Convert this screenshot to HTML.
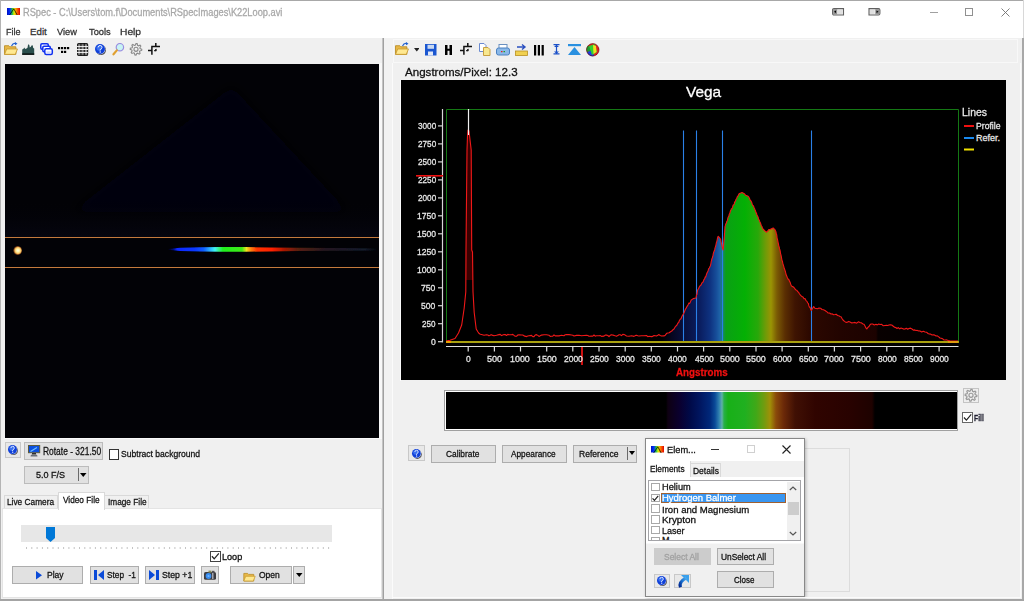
<!DOCTYPE html>
<html><head><meta charset="utf-8"><style>
html,body{margin:0;padding:0;width:1024px;height:601px;overflow:hidden;background:#f0f0f0}
body{position:relative;font-family:"Liberation Sans",sans-serif}
.t{position:absolute;white-space:pre;transform-origin:0 0;font-family:"Liberation Sans",sans-serif;-webkit-text-stroke:0.28px currentColor}
</style></head><body>
<div style="position:absolute;left:0px;top:0px;width:1024px;height:601px;background:#f0f0f0"></div>
<div style="position:absolute;left:0px;top:0px;width:1024px;height:38px;background:#fff"></div>
<svg style="position:absolute;left:7px;top:8px" width="13" height="7"><defs><linearGradient id="ri" x1="0" x2="1"><stop offset="0" stop-color="#0010c0"/><stop offset="0.22" stop-color="#0030ff"/><stop offset="0.4" stop-color="#20c040"/><stop offset="0.55" stop-color="#e0f000"/><stop offset="0.75" stop-color="#ff7000"/><stop offset="1" stop-color="#e00000"/></linearGradient></defs><rect width="13" height="7" fill="url(#ri)"/><path d="M2.6,7 L6.8,0.8 L10.2,7" stroke="#000" stroke-width="1" fill="none" opacity="0.75"/></svg>
<svg style="position:absolute;left:832px;top:8px" width="13" height="8"><path d="M2,0.6 H11.5 V7 H2 Q0.6,7 0.6,5.6 V2 Q0.6,0.6 2,0.6Z" fill="#f0f0f0" stroke="#606060" stroke-width="1.1"/><rect x="1.2" y="1.2" width="4" height="5.3" fill="#909090"/><path d="M2,3.8 L4,2.6 L4,5Z" fill="#000"/><rect x="6" y="1.8" width="4.5" height="4.2" fill="#e0e0e0"/></svg>
<svg style="position:absolute;left:868px;top:8px" width="13" height="8"><path d="M1,0.6 H10.5 Q11.9,0.6 11.9,2 V5.6 Q11.9,7 10.5,7 H1Z" fill="#f0f0f0" stroke="#606060" stroke-width="1.1"/><rect x="7.3" y="1.2" width="4" height="5.3" fill="#909090"/><path d="M10.5,3.8 L8.5,2.6 L8.5,5Z" fill="#000"/><rect x="2" y="1.8" width="4.5" height="4.2" fill="#e0e0e0"/></svg>
<div style="position:absolute;left:930px;top:11.5px;width:8px;height:1px;background:#a0a0a0"></div>
<div style="position:absolute;left:965px;top:8px;width:8px;height:8px;border:1px solid #909090;box-sizing:border-box"></div>
<svg style="position:absolute;left:1001px;top:8px" width="9" height="9"><path d="M0.5,0.5 L8.5,8.5 M8.5,0.5 L0.5,8.5" stroke="#707070" stroke-width="0.9" fill="none"/></svg>
<div style="position:absolute;left:1px;top:38px;width:381px;height:562px;background:#f0f0f0"></div>
<div style="position:absolute;left:5px;top:64px;width:374px;height:374px;background:#020206"></div>
<div style="position:absolute;left:379px;top:63px;width:3px;height:376px;background:#f8f8f8"></div>
<div style="position:absolute;left:4px;top:438px;width:378px;height:1px;background:#fafafa"></div>
<svg style="position:absolute;left:0;top:0" width="384" height="440"><defs><linearGradient id="tb" x1="0" y1="0" x2="0" y2="1"><stop offset="0" stop-color="#020206" stop-opacity="0"/><stop offset="1" stop-color="#05050f"/></linearGradient></defs><filter id="tbl"><feGaussianBlur stdDeviation="6"/></filter><polygon points="232,86 349,212 71,212" fill="#040407" filter="url(#tbl)"/><rect x="5" y="200" width="374" height="37" fill="url(#tb)"/></svg>
<div style="position:absolute;left:5px;top:236.6px;width:374px;height:1.5px;background:#c47a3c"></div>
<div style="position:absolute;left:5px;top:266.8px;width:374px;height:1.5px;background:#c47a3c"></div>
<div style="position:absolute;left:12.5px;top:245.5px;width:9px;height:9px;border-radius:50%;background:radial-gradient(circle at 55% 50%,#ffffe8 0,#fff0a0 25%,#f8c060 45%,rgba(200,100,30,0.6) 62%,rgba(160,60,0,0) 75%)"></div>
<svg style="position:absolute;left:0;top:0" width="384" height="300"><defs><linearGradient id="vs" gradientUnits="userSpaceOnUse" x1="168" y1="0" x2="378" y2="0"><stop offset="0.0000" stop-color="#000a70" stop-opacity="0"/><stop offset="0.0238" stop-color="#000a70" stop-opacity="1"/><stop offset="0.0429" stop-color="#0a28ff" stop-opacity="1"/><stop offset="0.1286" stop-color="#0a38ff" stop-opacity="1"/><stop offset="0.1714" stop-color="#1060ff" stop-opacity="1"/><stop offset="0.2048" stop-color="#30c0ff" stop-opacity="1"/><stop offset="0.2238" stop-color="#40f4f4" stop-opacity="1"/><stop offset="0.2429" stop-color="#38f080" stop-opacity="1"/><stop offset="0.2619" stop-color="#20f020" stop-opacity="1"/><stop offset="0.3524" stop-color="#40e818" stop-opacity="1"/><stop offset="0.3738" stop-color="#f0e020" stop-opacity="1"/><stop offset="0.3952" stop-color="#ff8010" stop-opacity="1"/><stop offset="0.4238" stop-color="#ff3400" stop-opacity="1"/><stop offset="0.4952" stop-color="#ff2000" stop-opacity="1"/><stop offset="0.5524" stop-color="#a81800" stop-opacity="1"/><stop offset="0.6190" stop-color="#582010" stop-opacity="1"/><stop offset="0.7476" stop-color="#241820" stop-opacity="1"/><stop offset="0.9381" stop-color="#121a2c" stop-opacity="1"/><stop offset="1.0000" stop-color="#101828" stop-opacity="0"/></linearGradient><filter id="bl" x="-5%" y="-100%" width="110%" height="300%"><feGaussianBlur stdDeviation="0.7"/></filter></defs><polygon points="168,249.10 180,247.80 200,247.20 220,247.00 245,247.10 270,247.40 300,247.80 340,248.10 378,248.40 378,250.40 340,250.70 300,251.00 270,251.40 245,251.70 220,251.80 200,251.60 180,251.00 168,249.70" fill="url(#vs)" filter="url(#bl)"/></svg>
<div style="position:absolute;left:382px;top:38px;width:1px;height:562px;background:#c4c4c4"></div>
<div style="position:absolute;left:383px;top:38px;width:1px;height:562px;background:#a0a0a0"></div>
<div style="position:absolute;left:384px;top:38px;width:9px;height:562px;background:#f2f2f2"></div>
<div style="position:absolute;left:392px;top:63px;width:1px;height:536px;background:#fbfbfb"></div>
<div style="position:absolute;left:400px;top:63px;width:1px;height:318px;background:#fbfbfb"></div>
<svg style="position:absolute;left:4px;top:44px" width="14" height="11" viewBox="0 0 13 10"><path d="M0.5,1.5 L4.5,1.5 L5.5,2.5 L11,2.5 L11,9.5 L0.5,9.5Z" fill="#e8b848" stroke="#b88a20" stroke-width="0.8"/><path d="M0.5,9.5 L2.5,4.5 L12.5,4.5 L10.5,9.5Z" fill="#ffe890" stroke="#c89a30" stroke-width="0.8"/></svg>
<svg style="position:absolute;left:11px;top:42px" width="7" height="5"><path d="M0.5,4 Q2,0.5 5,1.5" stroke="#2060d0" stroke-width="1.2" fill="none"/><path d="M4,0 L6.5,1.8 L4,3.2Z" fill="#2060d0"/></svg>
<svg style="position:absolute;left:22px;top:44px" width="13" height="11"><path d="M0.2,10.7 L0.2,5.6 L1.5,4.8 L2.3,3.4 L3.2,5 L4.5,4.6 L5.5,3.8 L6,1 L6.6,0.3 L7.3,1 L7.8,3.4 L8.8,2.8 L9.6,1.4 L10.3,1.1 L10.9,2.2 L11.2,4 L12.2,4.4 L12.2,10.7Z" fill="#2a4e4c"/><rect x="0.2" y="9.4" width="12" height="1.4" fill="#080c0c"/></svg>
<svg style="position:absolute;left:39.5px;top:43px" width="14" height="13"><rect x="0.8" y="0.8" width="7.5" height="5.5" rx="1.2" fill="#fff" stroke="#1030f0" stroke-width="1.5"/><rect x="2.8" y="3.3" width="7.5" height="5.5" rx="1.2" fill="#fff" stroke="#1030f0" stroke-width="1.5"/><rect x="4.8" y="5.8" width="7.5" height="5.8" rx="1.5" fill="#fff" stroke="#1030f0" stroke-width="1.5"/><rect x="6.5" y="8.3" width="4.2" height="1.8" fill="#d0d8ff"/></svg>
<svg style="position:absolute;left:58px;top:47px" width="13" height="7"><rect x="0" y="0" width="2.2" height="2.2" fill="#000"/><rect x="3" y="0" width="2.2" height="2.2" fill="#000"/><rect x="6" y="0" width="2.2" height="2.2" fill="#000"/><rect x="9" y="0" width="2.2" height="2.2" fill="#000"/><rect x="3" y="3.8" width="2.2" height="2.2" fill="#000"/><rect x="6" y="3.8" width="2.2" height="2.2" fill="#000"/></svg>
<svg style="position:absolute;left:77px;top:43px" width="12" height="13"><rect x="0.6" y="0.6" width="10" height="11.8" rx="1" fill="#8c8c8c" stroke="#222" stroke-width="1.2"/><line x1="3.93" y1="0" x2="3.93" y2="13" stroke="#111" stroke-width="1.1"/><line x1="7.26" y1="0" x2="7.26" y2="13" stroke="#111" stroke-width="1.1"/><line x1="0" y1="3.55" x2="11" y2="3.55" stroke="#fff" stroke-width="0.9"/><line x1="0" y1="6.50" x2="11" y2="6.50" stroke="#fff" stroke-width="0.9"/><line x1="0" y1="9.45" x2="11" y2="9.45" stroke="#fff" stroke-width="0.9"/></svg>
<svg style="position:absolute;left:94px;top:43.4px" width="14" height="14" viewBox="-6 -6 14 14"><circle cx="1" cy="1.1" r="5" fill="#505058"/><circle cx="0.3" cy="0.3" r="5" fill="#f4f4fa"/><circle cx="0" cy="0" r="5" fill="#1040d8"/><circle cx="-0.8" cy="-1" r="2.75" fill="#3a70f0"/><path d="M-1.80,-1.60 Q-1.50,-3.60 0.2,-3.60 Q2.25,-3.50 2.00,-1.50 Q1.75,0 0.1,0.60 L0.1,1.60" stroke="#e8f0ff" stroke-width="1.00" fill="none"/><rect x="-0.40" y="2.40" width="1.25" height="1.20" fill="#fff"/></svg>
<svg style="position:absolute;left:112px;top:43px" width="14" height="13"><circle cx="7.9" cy="4.2" r="3.7" fill="#c8f4f4" stroke="#9a8ee0" stroke-width="1.2"/><path d="M4.8,7.4 L1.5,11.3" stroke="#e0a030" stroke-width="2.2" stroke-linecap="round"/></svg>
<svg style="position:absolute;left:0;top:0;overflow:visible" width="1" height="1"><path d="M141.80,49.30 L141.69,50.43 L139.86,50.90 L139.47,51.62 L140.10,53.40 L139.22,54.12 L137.60,53.16 L136.81,53.40 L136.00,55.10 L134.87,54.99 L134.40,53.16 L133.68,52.77 L131.90,53.40 L131.18,52.52 L132.14,50.90 L131.90,50.11 L130.20,49.30 L130.31,48.17 L132.14,47.70 L132.53,46.98 L131.90,45.20 L132.78,44.48 L134.40,45.44 L135.19,45.20 L136.00,43.50 L137.13,43.61 L137.60,45.44 L138.32,45.83 L140.10,45.20 L140.82,46.08 L139.86,47.70 L140.10,48.49Z" fill="none" stroke="#8a8a8a" stroke-width="1.1"/><circle cx="136" cy="49.3" r="2.03" fill="none" stroke="#8a8a8a" stroke-width="1.1"/></svg>
<svg style="position:absolute;left:147.8px;top:43px" width="13" height="13"><path d="M0,7.6 H4 M3.9,3.4 V11.7 M3.2,3.4 H12 M7.8,0 V3.4" stroke="#111" stroke-width="1.5" fill="none"/><path d="M6.2,7.8 L8.2,6 L8.2,8 Z" fill="#111" stroke="#111" stroke-width="0.8"/></svg>
<div style="position:absolute;left:5px;top:442px;width:16px;height:15.5px;background:#e8e8e8;border:1px solid #c8c8c8;box-sizing:border-box"></div>
<svg style="position:absolute;left:7.300000000000001px;top:444.3px" width="13.0" height="13.0" viewBox="-5.5 -5.5 13.0 13.0"><circle cx="1" cy="1.1" r="4.5" fill="#505058"/><circle cx="0.3" cy="0.3" r="4.5" fill="#f4f4fa"/><circle cx="0" cy="0" r="4.5" fill="#1040d8"/><circle cx="-0.8" cy="-1" r="2.475" fill="#3a70f0"/><path d="M-1.62,-1.44 Q-1.35,-3.24 0.2,-3.24 Q2.02,-3.15 1.80,-1.35 Q1.57,0 0.1,0.54 L0.1,1.44" stroke="#e8f0ff" stroke-width="0.90" fill="none"/><rect x="-0.36" y="2.16" width="1.12" height="1.08" fill="#fff"/></svg>
<div style="position:absolute;left:24px;top:442px;width:79px;height:18px;background:#e1e1e1;border:1px solid #bcbcbc;box-sizing:border-box"></div>
<svg style="position:absolute;left:28px;top:445px" width="13" height="12"><rect x="0.5" y="0.5" width="11.2" height="7.2" fill="#0a50e0" stroke="#5a5a40"/><path d="M2.5,6.5 L9,2.5" stroke="#70c0ff" stroke-width="1.1"/><rect x="4" y="8" width="4" height="1.5" fill="#303030"/><path d="M2.5,11.5 Q2.5,9.5 4,9.5 H8 Q9.5,9.5 9.5,11.5Z" fill="#6a7078"/></svg>
<div style="position:absolute;left:108.7px;top:449px;width:10.5px;height:10.5px;background:#fff;border:1px solid #333;box-sizing:border-box"></div>
<div style="position:absolute;left:24px;top:466px;width:65px;height:18px;background:#e1e1e1;border:1px solid #bcbcbc;box-sizing:border-box"></div>
<div style="position:absolute;left:78px;top:468px;width:1.2px;height:13px;background:#6a6a6a"></div>
<svg style="position:absolute;left:80px;top:473px" width="6.5" height="4"><path d="M0,0 L6.5,0 L3.25,4Z" fill="#000"/></svg>
<div style="position:absolute;left:4px;top:495px;width:54px;height:14px;background:#f0f0f0;border:1px solid #d9d9d9;border-bottom:none;box-sizing:border-box"></div>
<div style="position:absolute;left:104px;top:495px;width:45px;height:14px;background:#f0f0f0;border:1px solid #d9d9d9;border-bottom:none;box-sizing:border-box"></div>
<div style="position:absolute;left:2px;top:508px;width:380px;height:90px;background:#fff;border:1px solid #e4e4e4;box-sizing:border-box"></div>
<div style="position:absolute;left:57.5px;top:492px;width:47px;height:18px;background:#fff;border:1px solid #d9d9d9;border-bottom:none;box-sizing:border-box"></div>
<div style="position:absolute;left:21px;top:525px;width:311px;height:17px;background:#e7e7e7"></div>
<svg style="position:absolute;left:46px;top:526.5px" width="10" height="16"><path d="M0,0 L9,0 L9,11 L4.5,15 L0,11Z" fill="#0078d7"/></svg>
<svg style="position:absolute;left:0;top:547px" width="340" height="3"><rect x="26.0" y="0" width="1" height="2" fill="#c4c4c4"/><rect x="31.3" y="0" width="1" height="2" fill="#c4c4c4"/><rect x="36.6" y="0" width="1" height="2" fill="#c4c4c4"/><rect x="41.9" y="0" width="1" height="2" fill="#c4c4c4"/><rect x="47.2" y="0" width="1" height="2" fill="#c4c4c4"/><rect x="52.5" y="0" width="1" height="2" fill="#c4c4c4"/><rect x="57.8" y="0" width="1" height="2" fill="#c4c4c4"/><rect x="63.1" y="0" width="1" height="2" fill="#c4c4c4"/><rect x="68.4" y="0" width="1" height="2" fill="#c4c4c4"/><rect x="73.7" y="0" width="1" height="2" fill="#c4c4c4"/><rect x="79.0" y="0" width="1" height="2" fill="#c4c4c4"/><rect x="84.3" y="0" width="1" height="2" fill="#c4c4c4"/><rect x="89.6" y="0" width="1" height="2" fill="#c4c4c4"/><rect x="94.9" y="0" width="1" height="2" fill="#c4c4c4"/><rect x="100.2" y="0" width="1" height="2" fill="#c4c4c4"/><rect x="105.5" y="0" width="1" height="2" fill="#c4c4c4"/><rect x="110.8" y="0" width="1" height="2" fill="#c4c4c4"/><rect x="116.1" y="0" width="1" height="2" fill="#c4c4c4"/><rect x="121.4" y="0" width="1" height="2" fill="#c4c4c4"/><rect x="126.7" y="0" width="1" height="2" fill="#c4c4c4"/><rect x="132.0" y="0" width="1" height="2" fill="#c4c4c4"/><rect x="137.3" y="0" width="1" height="2" fill="#c4c4c4"/><rect x="142.6" y="0" width="1" height="2" fill="#c4c4c4"/><rect x="147.9" y="0" width="1" height="2" fill="#c4c4c4"/><rect x="153.2" y="0" width="1" height="2" fill="#c4c4c4"/><rect x="158.5" y="0" width="1" height="2" fill="#c4c4c4"/><rect x="163.8" y="0" width="1" height="2" fill="#c4c4c4"/><rect x="169.1" y="0" width="1" height="2" fill="#c4c4c4"/><rect x="174.4" y="0" width="1" height="2" fill="#c4c4c4"/><rect x="179.7" y="0" width="1" height="2" fill="#c4c4c4"/><rect x="185.0" y="0" width="1" height="2" fill="#c4c4c4"/><rect x="190.3" y="0" width="1" height="2" fill="#c4c4c4"/><rect x="195.6" y="0" width="1" height="2" fill="#c4c4c4"/><rect x="200.9" y="0" width="1" height="2" fill="#c4c4c4"/><rect x="206.2" y="0" width="1" height="2" fill="#c4c4c4"/><rect x="211.5" y="0" width="1" height="2" fill="#c4c4c4"/><rect x="216.8" y="0" width="1" height="2" fill="#c4c4c4"/><rect x="222.1" y="0" width="1" height="2" fill="#c4c4c4"/><rect x="227.4" y="0" width="1" height="2" fill="#c4c4c4"/><rect x="232.7" y="0" width="1" height="2" fill="#c4c4c4"/><rect x="238.0" y="0" width="1" height="2" fill="#c4c4c4"/><rect x="243.3" y="0" width="1" height="2" fill="#c4c4c4"/><rect x="248.6" y="0" width="1" height="2" fill="#c4c4c4"/><rect x="253.9" y="0" width="1" height="2" fill="#c4c4c4"/><rect x="259.2" y="0" width="1" height="2" fill="#c4c4c4"/><rect x="264.5" y="0" width="1" height="2" fill="#c4c4c4"/><rect x="269.8" y="0" width="1" height="2" fill="#c4c4c4"/><rect x="275.1" y="0" width="1" height="2" fill="#c4c4c4"/><rect x="280.4" y="0" width="1" height="2" fill="#c4c4c4"/><rect x="285.7" y="0" width="1" height="2" fill="#c4c4c4"/><rect x="291.0" y="0" width="1" height="2" fill="#c4c4c4"/><rect x="296.3" y="0" width="1" height="2" fill="#c4c4c4"/><rect x="301.6" y="0" width="1" height="2" fill="#c4c4c4"/><rect x="306.9" y="0" width="1" height="2" fill="#c4c4c4"/><rect x="312.2" y="0" width="1" height="2" fill="#c4c4c4"/><rect x="317.5" y="0" width="1" height="2" fill="#c4c4c4"/><rect x="322.8" y="0" width="1" height="2" fill="#c4c4c4"/><rect x="328.1" y="0" width="1" height="2" fill="#c4c4c4"/></svg>
<div style="position:absolute;left:210px;top:551px;width:10.5px;height:10.5px;background:#fff;border:1px solid #444;box-sizing:border-box"></div><svg style="position:absolute;left:210px;top:551px" width="10.5" height="10.5"><path d="M1.89,5.25 L4.2,7.77 L8.82,2.31" stroke="#222" stroke-width="1.2" fill="none"/></svg>
<div style="position:absolute;left:12px;top:566px;width:71px;height:18px;background:#e1e1e1;border:1px solid #adadad;box-sizing:border-box"></div>
<svg style="position:absolute;left:36px;top:570.5px" width="7" height="9"><path d="M0,0 L6,4.3 L0,8.6Z" fill="#0a4ad8"/></svg>
<div style="position:absolute;left:90px;top:566px;width:49px;height:18px;background:#e1e1e1;border:1px solid #adadad;box-sizing:border-box"></div>
<svg style="position:absolute;left:94px;top:570px" width="11" height="10"><rect x="0" y="0" width="3" height="10" fill="#0a4ad8"/><path d="M10,0 L4,5 L10,10Z" fill="#0a4ad8"/></svg>
<div style="position:absolute;left:145px;top:566px;width:50px;height:18px;background:#e1e1e1;border:1px solid #adadad;box-sizing:border-box"></div>
<svg style="position:absolute;left:149px;top:570px" width="11" height="10"><path d="M0,0 L6,5 L0,10Z" fill="#0a4ad8"/><rect x="7" y="0" width="3" height="10" fill="#0a4ad8"/></svg>
<div style="position:absolute;left:201px;top:566px;width:18px;height:18px;background:#e1e1e1;border:1px solid #adadad;box-sizing:border-box"></div>
<svg style="position:absolute;left:204px;top:570px" width="12" height="10"><rect x="0" y="2" width="12" height="7.8" rx="1.6" fill="#3c3c40"/><rect x="4.5" y="0.6" width="3" height="2" fill="#8a9060"/><rect x="8" y="0.8" width="2.5" height="2" fill="#505058"/><circle cx="4.5" cy="6" r="2.9" fill="#3a8ef0"/><circle cx="4.5" cy="6" r="1.1" fill="#70b8ff"/><rect x="8.2" y="3" width="1.2" height="6" fill="#c0c0c8"/></svg>
<div style="position:absolute;left:230px;top:566px;width:62px;height:18px;background:#e1e1e1;border:1px solid #adadad;box-sizing:border-box"></div>
<svg style="position:absolute;left:243px;top:572px" width="13" height="9.5" viewBox="0 0 13 10"><path d="M0.5,1.5 L4.5,1.5 L5.5,2.5 L11,2.5 L11,9.5 L0.5,9.5Z" fill="#e8b848" stroke="#b88a20" stroke-width="0.8"/><path d="M0.5,9.5 L2.5,4.5 L12.5,4.5 L10.5,9.5Z" fill="#ffe890" stroke="#c89a30" stroke-width="0.8"/></svg>
<div style="position:absolute;left:293px;top:566px;width:12px;height:18px;background:#e1e1e1;border:1px solid #adadad;box-sizing:border-box"></div>
<svg style="position:absolute;left:296px;top:573px" width="6.5" height="4"><path d="M0,0 L6.5,0 L3.25,4Z" fill="#000"/></svg>
<div style="position:absolute;left:393px;top:39px;width:625px;height:24px;background:#f0f0f0;border:1px solid #f8f8f8;box-sizing:border-box"></div>
<div style="position:absolute;left:393px;top:63px;width:612px;height:17px;background:#f0f0f0"></div>
<svg style="position:absolute;left:395px;top:44px" width="14" height="11" viewBox="0 0 13 10"><path d="M0.5,1.5 L4.5,1.5 L5.5,2.5 L11,2.5 L11,9.5 L0.5,9.5Z" fill="#e8b848" stroke="#b88a20" stroke-width="0.8"/><path d="M0.5,9.5 L2.5,4.5 L12.5,4.5 L10.5,9.5Z" fill="#ffe890" stroke="#c89a30" stroke-width="0.8"/></svg>
<svg style="position:absolute;left:402px;top:42px" width="7" height="5"><path d="M0.5,4 Q2,0.5 5,1.5" stroke="#2060d0" stroke-width="1.2" fill="none"/><path d="M4,0 L6.5,1.8 L4,3.2Z" fill="#2060d0"/></svg>
<svg style="position:absolute;left:413.5px;top:48px" width="5.5" height="3.5"><path d="M0,0 L5.5,0 L2.75,3.5Z" fill="#222"/></svg>
<svg style="position:absolute;left:425px;top:43.5px" width="12" height="12"><rect x="0" y="0" width="11.5" height="11.5" fill="#1a56d0"/><rect x="2.5" y="0.8" width="6.5" height="4" fill="#c8d8f0"/><rect x="3" y="7.5" width="5" height="4" fill="#e0e8f8"/></svg>
<svg style="position:absolute;left:445px;top:44.5px" width="8" height="10"><path d="M0,0 H2.5 V3.8 H4.5 V0 H7 V10 H4.5 V5.8 H2.5 V10 H0Z" fill="#000"/></svg>
<svg style="position:absolute;left:460.2px;top:43px" width="13" height="13"><path d="M0,7.6 H4 M3.9,3.4 V11.7 M3.2,3.4 H12 M7.8,0 V3.4" stroke="#111" stroke-width="1.5" fill="none"/><path d="M6.2,7.8 L8.2,6 L8.2,8 Z" fill="#111" stroke="#111" stroke-width="0.8"/></svg>
<svg style="position:absolute;left:479px;top:43px" width="12" height="13"><path d="M0.5,0.5 H5 L7,2.5 V8.5 H0.5Z" fill="#fff" stroke="#6a8ad0"/><path d="M4.5,4.5 H9 L11,6.5 V12.5 H4.5Z" fill="#f8e890" stroke="#c8a040"/></svg>
<svg style="position:absolute;left:496px;top:43.5px" width="14" height="12"><rect x="3" y="0.5" width="8" height="4" fill="#fff" stroke="#6a90c0"/><rect x="0.5" y="4" width="13" height="7" rx="2" fill="#8ab8e8" stroke="#4a80c0"/><rect x="5" y="7" width="1.5" height="1.2" fill="#e02020"/><rect x="7.5" y="7" width="1.5" height="1.2" fill="#20a020"/></svg>
<svg style="position:absolute;left:515px;top:43px" width="13" height="13"><path d="M2,4 H10 M7,1.5 L10,4 L7,6.5" stroke="#2a50c0" stroke-width="1.4" fill="none"/><rect x="0.5" y="8" width="12" height="4.5" fill="#f0d050" stroke="#b89020" stroke-width="0.8"/></svg>
<svg style="position:absolute;left:534px;top:45px" width="11" height="11"><rect x="0.0" y="0" width="2.2" height="10.5" fill="#000"/><rect x="3.8" y="0" width="2.2" height="10.5" fill="#000"/><rect x="7.6" y="0" width="2.2" height="10.5" fill="#000"/></svg>
<svg style="position:absolute;left:553px;top:44px" width="8" height="11"><path d="M3.5,0 V10.5 M0.5,0.7 H6.5 M0.5,9.8 H6.5" stroke="#1a50c8" stroke-width="1.2"/><path d="M1,3 L3.5,0.8 L6,3Z M1,7.5 L3.5,9.7 L6,7.5Z" fill="#1a50c8"/></svg>
<svg style="position:absolute;left:568px;top:44px" width="14" height="12"><rect x="0" y="0" width="13" height="2.2" fill="#2a90e0"/><path d="M6.5,3 L13,11 L0,11Z" fill="#2a90e0"/></svg>
<svg style="position:absolute;left:586px;top:43px" width="14" height="14"><circle cx="6.8" cy="6.8" r="6.2" fill="#e02020"/><path d="M6.8,6.8 L1,9 A6.2,6.2 0 0 0 8,13 Z" fill="#1a40e0"/><path d="M6.8,6.8 L2,2.5 A6.2,6.2 0 0 0 1,9Z" fill="#1aa030"/><path d="M3,3 L9,1 L11,9 L6,12Z" fill="#30d030"/><path d="M7,2 L10,3 L10.5,9 L7.5,11Z" fill="#f0e020"/><circle cx="6.8" cy="6.8" r="6.2" fill="none" stroke="#600" stroke-width="0.6"/></svg>
<div style="position:absolute;left:401px;top:80px;width:605px;height:300px;background:#000"></div>
<svg style="position:absolute;left:0;top:0" width="1024" height="601"><defs><linearGradient id="fg" gradientUnits="userSpaceOnUse" x1="640" y1="0" x2="958" y2="0"><stop offset="0.0000" stop-color="#000000"/><stop offset="0.0692" stop-color="#000000"/><stop offset="0.1006" stop-color="#060620"/><stop offset="0.1415" stop-color="#081040"/><stop offset="0.1887" stop-color="#0a1e60"/><stop offset="0.2201" stop-color="#0e3280"/><stop offset="0.2390" stop-color="#164c98"/><stop offset="0.2516" stop-color="#1e64a8"/><stop offset="0.2610" stop-color="#168a60"/><stop offset="0.2704" stop-color="#0aa014"/><stop offset="0.3302" stop-color="#04b004"/><stop offset="0.3711" stop-color="#28a80a"/><stop offset="0.3931" stop-color="#6a9c08"/><stop offset="0.4119" stop-color="#9a9404"/><stop offset="0.4308" stop-color="#7a5a04"/><stop offset="0.4560" stop-color="#5a2e02"/><stop offset="0.4874" stop-color="#3e1402"/><stop offset="0.5346" stop-color="#2c0800"/><stop offset="0.6289" stop-color="#220400"/><stop offset="0.7421" stop-color="#1c0200"/><stop offset="0.7484" stop-color="#080000"/><stop offset="1.0000" stop-color="#000000"/></linearGradient></defs>
<polygon points="446.0,341.0 450.0,340.2 455.0,338.5 458.5,333.0 461.7,325.0 464.2,308.0 465.8,291.7 466.0,250.0 466.5,200.0 467.0,150.0 467.5,136.0 468.0,130.0 469.0,131.0 471.2,150.0 471.7,250.0 472.5,252.0 473.0,291.7 474.2,312.5 476.2,329.0 478.0,332.0 479.2,333.6 480.3,334.2 481.5,334.5 484.0,335.2 486.5,334.8 487.8,335.0 489.0,335.9 490.2,335.1 491.5,334.7 492.8,335.4 494.0,335.7 496.5,335.3 499.0,334.6 500.2,334.4 501.5,335.6 502.8,335.0 504.0,334.6 505.2,334.5 506.5,335.5 507.8,334.4 509.0,334.7 511.5,334.7 512.8,334.4 514.0,335.4 515.2,336.3 516.5,336.3 517.8,335.0 519.0,334.8 521.5,335.0 522.8,335.0 524.0,335.9 526.5,336.6 527.8,336.0 529.0,335.8 531.5,335.4 532.8,336.6 534.0,336.6 535.2,335.0 536.5,334.6 537.8,335.4 539.0,336.4 540.2,335.8 541.5,335.1 544.0,334.8 546.5,334.8 549.0,335.2 550.2,336.4 551.5,336.3 552.8,336.1 554.0,334.9 555.2,335.9 556.5,335.8 559.0,335.9 561.5,335.3 564.0,335.7 565.2,334.8 566.5,334.6 569.0,334.6 571.5,335.0 572.8,335.3 574.0,336.0 576.5,335.4 579.0,335.2 581.5,335.8 584.0,335.5 586.5,335.2 587.8,335.5 589.0,336.2 591.5,336.0 592.8,336.2 594.0,335.0 595.2,336.1 596.5,335.8 599.0,335.7 600.2,335.5 601.5,336.4 604.0,336.1 605.2,335.1 606.5,335.1 607.8,335.5 609.0,336.7 610.2,335.3 611.5,334.8 614.0,335.4 615.2,335.8 616.5,336.2 617.8,335.6 619.0,334.8 620.2,334.8 621.5,335.6 622.8,334.3 624.0,334.6 625.2,335.1 626.5,336.0 629.0,336.2 631.5,335.8 634.0,336.4 635.2,335.6 636.5,335.2 637.8,335.7 639.0,336.0 641.5,335.8 644.0,335.8 646.5,335.5 647.8,336.7 649.0,336.3 651.5,336.6 652.8,336.4 654.0,335.5 656.5,336.0 657.8,335.3 659.0,334.6 660.2,335.5 661.5,336.0 664.0,335.9 665.3,335.2 666.7,333.3 668.0,333.0 669.2,332.8 670.5,331.8 671.8,331.1 673.0,329.7 674.0,329.0 675.0,327.2 676.0,326.0 677.0,325.0 677.8,323.1 678.6,322.7 679.4,320.5 680.2,319.3 681.0,318.7 681.8,316.8 682.5,315.3 683.2,314.2 684.0,313.0 684.7,311.0 685.3,309.5 686.0,308.4 686.7,307.0 687.3,306.1 688.0,305.0 688.8,303.1 689.6,303.4 690.4,301.9 691.2,300.0 692.0,299.5 693.3,298.6 694.7,298.3 696.0,298.0 696.3,296.4 696.6,294.7 696.9,294.6 697.1,293.5 697.4,291.3 697.7,290.0 698.5,288.7 699.4,286.8 700.2,285.6 701.0,285.0 701.7,283.5 702.4,282.2 703.2,281.9 703.9,279.7 704.6,279.0 705.2,276.9 705.7,277.1 706.3,275.0 706.9,273.1 707.4,272.4 708.0,271.0 708.7,268.7 709.3,268.0 710.0,266.5 710.3,266.0 710.7,264.6 711.0,263.0 711.3,261.1 711.7,260.0 712.0,258.4 712.3,258.1 712.7,256.5 713.0,255.6 713.3,253.6 713.7,252.2 714.0,251.4 714.4,250.6 714.7,249.7 715.0,248.2 715.4,246.9 715.8,245.6 716.1,244.2 716.5,242.2 716.8,241.4 717.2,239.8 717.5,238.1 717.9,236.8 718.2,236.3 719.3,237.3 720.4,239.0 720.8,240.0 721.1,242.1 721.5,243.9 721.8,244.4 722.1,246.6 722.5,248.0 722.9,249.4 723.2,250.0 723.3,248.4 723.4,246.8 723.5,245.5 723.6,244.0 723.7,242.7 723.8,242.0 723.9,241.0 724.0,239.6 724.2,237.6 724.3,236.5 724.4,235.4 724.5,232.9 724.6,232.4 724.7,231.5 724.8,229.9 724.9,228.5 725.0,226.7 725.4,225.4 725.8,223.7 726.3,223.4 726.7,221.5 727.1,221.0 727.5,220.0 727.9,217.9 728.4,216.6 728.8,216.3 729.2,214.3 729.8,213.4 730.3,211.3 730.9,210.0 731.4,208.8 732.0,208.8 732.5,207.4 733.1,205.1 733.6,205.0 734.2,204.0 734.7,202.0 735.4,201.1 736.0,199.4 736.7,198.5 737.3,196.6 738.0,196.0 739.1,193.8 740.2,193.2 742.0,192.5 744.3,193.7 745.7,195.4 747.1,195.8 748.5,196.5 749.3,198.0 750.2,200.2 751.0,201.0 751.6,202.2 752.2,204.2 752.8,205.4 753.4,205.7 754.0,207.5 754.5,208.4 755.0,209.7 755.5,210.8 756.0,212.6 756.5,213.4 757.0,215.0 757.5,216.2 758.1,217.0 758.6,219.5 759.2,219.9 759.7,221.4 760.3,222.8 760.8,224.0 761.3,225.9 761.9,226.4 762.5,228.4 763.0,229.0 764.1,230.1 765.2,231.2 766.3,232.2 767.5,231.3 768.8,229.6 770.0,229.5 771.6,228.7 773.2,228.0 774.1,228.8 775.1,229.9 776.0,232.0 776.3,233.9 776.6,234.3 776.9,236.2 777.1,238.1 777.4,239.2 777.7,240.3 778.0,242.0 778.3,243.4 778.6,244.8 778.9,246.5 779.2,246.8 779.5,248.9 779.9,249.8 780.2,251.2 780.5,253.3 780.8,254.3 781.1,255.7 781.4,257.0 781.7,258.8 782.0,260.5 782.4,261.1 782.7,262.8 783.0,264.0 783.4,265.3 783.8,266.7 784.2,268.3 784.6,269.3 785.1,270.7 785.5,272.0 785.9,274.0 786.3,275.0 786.7,276.0 787.4,277.8 788.0,279.1 788.7,279.2 789.3,280.9 790.0,282.0 790.7,284.2 791.3,285.5 792.0,286.4 793.0,286.7 794.0,287.5 795.0,289.0 795.9,289.9 796.8,290.3 797.7,291.6 798.6,292.3 799.5,294.0 800.7,295.3 801.8,296.5 803.0,297.0 804.0,298.7 805.0,298.6 806.0,300.6 807.0,301.4 807.6,302.9 808.3,303.4 808.9,305.9 809.5,307.3 810.1,307.4 810.8,309.8 811.4,310.4 812.2,309.0 812.9,307.8 813.7,306.6 814.9,308.3 816.0,308.5 817.5,308.8 819.0,308.0 820.5,308.2 822.0,309.5 823.5,309.8 825.0,310.4 826.0,311.3 827.0,311.9 828.0,313.0 829.5,313.0 831.0,314.0 832.3,313.9 833.7,314.7 835.0,314.5 836.2,314.2 837.5,315.5 838.8,315.8 840.0,316.4 841.0,316.8 842.0,318.5 843.0,320.0 844.5,321.4 846.0,322.4 847.3,322.3 848.7,321.4 850.0,322.0 851.7,322.9 853.3,322.7 855.0,322.4 856.7,323.2 858.3,321.8 860.0,322.5 861.5,322.9 863.0,324.0 864.0,324.3 865.0,326.0 865.9,327.9 866.8,329.0 867.9,327.4 869.0,326.5 870.0,324.7 871.0,324.0 872.7,324.0 874.3,324.9 876.0,324.3 877.3,324.9 878.7,324.0 880.0,324.5 881.7,324.3 883.3,325.8 885.0,325.5 886.3,325.4 887.7,325.5 889.0,325.0 890.3,324.7 891.7,325.0 893.0,326.0 894.3,327.1 895.7,327.5 897.0,328.5 898.3,327.6 899.7,328.9 901.0,328.0 902.3,328.5 903.7,329.1 905.0,329.0 906.3,328.2 907.7,329.2 909.0,328.5 910.5,328.1 912.0,329.0 913.3,330.1 914.7,329.9 916.0,330.5 917.3,330.4 918.7,330.9 920.0,331.0 921.7,332.0 923.3,331.3 925.0,332.0 926.5,332.2 928.0,333.5 929.3,334.0 930.7,334.1 932.0,335.0 933.3,334.7 934.7,335.1 936.0,336.0 937.3,335.9 938.7,336.9 940.0,338.0 941.2,338.2 942.5,338.7 943.8,339.9 945.0,340.0 946.7,339.9 948.3,340.5 950.0,340.7 955.0,341.0 958.0,341.0 958.0,342.0 446.0,342.0" fill="url(#fg)"/>
<polygon points="466,250 466.5,200 467,150 467.5,136 468,130 469,131 471.2,150 471.7,250 472.5,252 473,280 465.9,280" fill="#3a0000"/>
<path d="M446.5,342 V109.5 H958.5 V342" stroke="#147814" stroke-width="1" fill="none"/>
<path d="M442.5,109 V342.5" stroke="#d8d8d8" stroke-width="1.2" fill="none"/>
<path d="M438,341.7 H442" stroke="#d8d8d8" stroke-width="1.2"/>
<path d="M438,323.7 H442" stroke="#d8d8d8" stroke-width="1.2"/>
<path d="M438,305.7 H442" stroke="#d8d8d8" stroke-width="1.2"/>
<path d="M438,287.8 H442" stroke="#d8d8d8" stroke-width="1.2"/>
<path d="M438,269.8 H442" stroke="#d8d8d8" stroke-width="1.2"/>
<path d="M438,251.8 H442" stroke="#d8d8d8" stroke-width="1.2"/>
<path d="M438,233.8 H442" stroke="#d8d8d8" stroke-width="1.2"/>
<path d="M438,215.8 H442" stroke="#d8d8d8" stroke-width="1.2"/>
<path d="M438,197.9 H442" stroke="#d8d8d8" stroke-width="1.2"/>
<path d="M438,179.9 H442" stroke="#d8d8d8" stroke-width="1.2"/>
<path d="M438,161.9 H442" stroke="#d8d8d8" stroke-width="1.2"/>
<path d="M438,143.9 H442" stroke="#d8d8d8" stroke-width="1.2"/>
<path d="M438,125.9 H442" stroke="#d8d8d8" stroke-width="1.2"/>
<path d="M446,346.5 H958.5" stroke="#e0e0e0" stroke-width="1.2" fill="none"/>
<path d="M468.2,346 V351.5" stroke="#e0e0e0" stroke-width="1.2"/>
<path d="M494.4,346 V351.5" stroke="#e0e0e0" stroke-width="1.2"/>
<path d="M520.5,346 V351.5" stroke="#e0e0e0" stroke-width="1.2"/>
<path d="M546.7,346 V351.5" stroke="#e0e0e0" stroke-width="1.2"/>
<path d="M572.8,346 V351.5" stroke="#e0e0e0" stroke-width="1.2"/>
<path d="M599.0,346 V351.5" stroke="#e0e0e0" stroke-width="1.2"/>
<path d="M625.2,346 V351.5" stroke="#e0e0e0" stroke-width="1.2"/>
<path d="M651.3,346 V351.5" stroke="#e0e0e0" stroke-width="1.2"/>
<path d="M677.5,346 V351.5" stroke="#e0e0e0" stroke-width="1.2"/>
<path d="M703.6,346 V351.5" stroke="#e0e0e0" stroke-width="1.2"/>
<path d="M729.8,346 V351.5" stroke="#e0e0e0" stroke-width="1.2"/>
<path d="M756.0,346 V351.5" stroke="#e0e0e0" stroke-width="1.2"/>
<path d="M782.1,346 V351.5" stroke="#e0e0e0" stroke-width="1.2"/>
<path d="M808.3,346 V351.5" stroke="#e0e0e0" stroke-width="1.2"/>
<path d="M834.4,346 V351.5" stroke="#e0e0e0" stroke-width="1.2"/>
<path d="M860.6,346 V351.5" stroke="#e0e0e0" stroke-width="1.2"/>
<path d="M886.8,346 V351.5" stroke="#e0e0e0" stroke-width="1.2"/>
<path d="M912.9,346 V351.5" stroke="#e0e0e0" stroke-width="1.2"/>
<path d="M939.1,346 V351.5" stroke="#e0e0e0" stroke-width="1.2"/>
<path d="M683.5,130.5 V342" stroke="#2a80e8" stroke-width="1.1"/>
<path d="M696.5,130.5 V342" stroke="#2a80e8" stroke-width="1.1"/>
<path d="M722.5,130.5 V342" stroke="#2a80e8" stroke-width="1.1"/>
<path d="M811.5,130.5 V342" stroke="#2a80e8" stroke-width="1.1"/>
<polyline points="446.0,341.0 450.0,340.2 455.0,338.5 458.5,333.0 461.7,325.0 464.2,308.0 465.8,291.7 466.0,250.0 466.5,200.0 467.0,150.0 467.5,136.0 468.0,130.0 469.0,131.0 471.2,150.0 471.7,250.0 472.5,252.0 473.0,291.7 474.2,312.5 476.2,329.0 478.0,332.0 479.2,333.6 480.3,334.2 481.5,334.5 484.0,335.2 486.5,334.8 487.8,335.0 489.0,335.9 490.2,335.1 491.5,334.7 492.8,335.4 494.0,335.7 496.5,335.3 499.0,334.6 500.2,334.4 501.5,335.6 502.8,335.0 504.0,334.6 505.2,334.5 506.5,335.5 507.8,334.4 509.0,334.7 511.5,334.7 512.8,334.4 514.0,335.4 515.2,336.3 516.5,336.3 517.8,335.0 519.0,334.8 521.5,335.0 522.8,335.0 524.0,335.9 526.5,336.6 527.8,336.0 529.0,335.8 531.5,335.4 532.8,336.6 534.0,336.6 535.2,335.0 536.5,334.6 537.8,335.4 539.0,336.4 540.2,335.8 541.5,335.1 544.0,334.8 546.5,334.8 549.0,335.2 550.2,336.4 551.5,336.3 552.8,336.1 554.0,334.9 555.2,335.9 556.5,335.8 559.0,335.9 561.5,335.3 564.0,335.7 565.2,334.8 566.5,334.6 569.0,334.6 571.5,335.0 572.8,335.3 574.0,336.0 576.5,335.4 579.0,335.2 581.5,335.8 584.0,335.5 586.5,335.2 587.8,335.5 589.0,336.2 591.5,336.0 592.8,336.2 594.0,335.0 595.2,336.1 596.5,335.8 599.0,335.7 600.2,335.5 601.5,336.4 604.0,336.1 605.2,335.1 606.5,335.1 607.8,335.5 609.0,336.7 610.2,335.3 611.5,334.8 614.0,335.4 615.2,335.8 616.5,336.2 617.8,335.6 619.0,334.8 620.2,334.8 621.5,335.6 622.8,334.3 624.0,334.6 625.2,335.1 626.5,336.0 629.0,336.2 631.5,335.8 634.0,336.4 635.2,335.6 636.5,335.2 637.8,335.7 639.0,336.0 641.5,335.8 644.0,335.8 646.5,335.5 647.8,336.7 649.0,336.3 651.5,336.6 652.8,336.4 654.0,335.5 656.5,336.0 657.8,335.3 659.0,334.6 660.2,335.5 661.5,336.0 664.0,335.9 665.3,335.2 666.7,333.3 668.0,333.0 669.2,332.8 670.5,331.8 671.8,331.1 673.0,329.7 674.0,329.0 675.0,327.2 676.0,326.0 677.0,325.0 677.8,323.1 678.6,322.7 679.4,320.5 680.2,319.3 681.0,318.7 681.8,316.8 682.5,315.3 683.2,314.2 684.0,313.0 684.7,311.0 685.3,309.5 686.0,308.4 686.7,307.0 687.3,306.1 688.0,305.0 688.8,303.1 689.6,303.4 690.4,301.9 691.2,300.0 692.0,299.5 693.3,298.6 694.7,298.3 696.0,298.0 696.3,296.4 696.6,294.7 696.9,294.6 697.1,293.5 697.4,291.3 697.7,290.0 698.5,288.7 699.4,286.8 700.2,285.6 701.0,285.0 701.7,283.5 702.4,282.2 703.2,281.9 703.9,279.7 704.6,279.0 705.2,276.9 705.7,277.1 706.3,275.0 706.9,273.1 707.4,272.4 708.0,271.0 708.7,268.7 709.3,268.0 710.0,266.5 710.3,266.0 710.7,264.6 711.0,263.0 711.3,261.1 711.7,260.0 712.0,258.4 712.3,258.1 712.7,256.5 713.0,255.6 713.3,253.6 713.7,252.2 714.0,251.4 714.4,250.6 714.7,249.7 715.0,248.2 715.4,246.9 715.8,245.6 716.1,244.2 716.5,242.2 716.8,241.4 717.2,239.8 717.5,238.1 717.9,236.8 718.2,236.3 719.3,237.3 720.4,239.0 720.8,240.0 721.1,242.1 721.5,243.9 721.8,244.4 722.1,246.6 722.5,248.0 722.9,249.4 723.2,250.0 723.3,248.4 723.4,246.8 723.5,245.5 723.6,244.0 723.7,242.7 723.8,242.0 723.9,241.0 724.0,239.6 724.2,237.6 724.3,236.5 724.4,235.4 724.5,232.9 724.6,232.4 724.7,231.5 724.8,229.9 724.9,228.5 725.0,226.7 725.4,225.4 725.8,223.7 726.3,223.4 726.7,221.5 727.1,221.0 727.5,220.0 727.9,217.9 728.4,216.6 728.8,216.3 729.2,214.3 729.8,213.4 730.3,211.3 730.9,210.0 731.4,208.8 732.0,208.8 732.5,207.4 733.1,205.1 733.6,205.0 734.2,204.0 734.7,202.0 735.4,201.1 736.0,199.4 736.7,198.5 737.3,196.6 738.0,196.0 739.1,193.8 740.2,193.2 742.0,192.5 744.3,193.7 745.7,195.4 747.1,195.8 748.5,196.5 749.3,198.0 750.2,200.2 751.0,201.0 751.6,202.2 752.2,204.2 752.8,205.4 753.4,205.7 754.0,207.5 754.5,208.4 755.0,209.7 755.5,210.8 756.0,212.6 756.5,213.4 757.0,215.0 757.5,216.2 758.1,217.0 758.6,219.5 759.2,219.9 759.7,221.4 760.3,222.8 760.8,224.0 761.3,225.9 761.9,226.4 762.5,228.4 763.0,229.0 764.1,230.1 765.2,231.2 766.3,232.2 767.5,231.3 768.8,229.6 770.0,229.5 771.6,228.7 773.2,228.0 774.1,228.8 775.1,229.9 776.0,232.0 776.3,233.9 776.6,234.3 776.9,236.2 777.1,238.1 777.4,239.2 777.7,240.3 778.0,242.0 778.3,243.4 778.6,244.8 778.9,246.5 779.2,246.8 779.5,248.9 779.9,249.8 780.2,251.2 780.5,253.3 780.8,254.3 781.1,255.7 781.4,257.0 781.7,258.8 782.0,260.5 782.4,261.1 782.7,262.8 783.0,264.0 783.4,265.3 783.8,266.7 784.2,268.3 784.6,269.3 785.1,270.7 785.5,272.0 785.9,274.0 786.3,275.0 786.7,276.0 787.4,277.8 788.0,279.1 788.7,279.2 789.3,280.9 790.0,282.0 790.7,284.2 791.3,285.5 792.0,286.4 793.0,286.7 794.0,287.5 795.0,289.0 795.9,289.9 796.8,290.3 797.7,291.6 798.6,292.3 799.5,294.0 800.7,295.3 801.8,296.5 803.0,297.0 804.0,298.7 805.0,298.6 806.0,300.6 807.0,301.4 807.6,302.9 808.3,303.4 808.9,305.9 809.5,307.3 810.1,307.4 810.8,309.8 811.4,310.4 812.2,309.0 812.9,307.8 813.7,306.6 814.9,308.3 816.0,308.5 817.5,308.8 819.0,308.0 820.5,308.2 822.0,309.5 823.5,309.8 825.0,310.4 826.0,311.3 827.0,311.9 828.0,313.0 829.5,313.0 831.0,314.0 832.3,313.9 833.7,314.7 835.0,314.5 836.2,314.2 837.5,315.5 838.8,315.8 840.0,316.4 841.0,316.8 842.0,318.5 843.0,320.0 844.5,321.4 846.0,322.4 847.3,322.3 848.7,321.4 850.0,322.0 851.7,322.9 853.3,322.7 855.0,322.4 856.7,323.2 858.3,321.8 860.0,322.5 861.5,322.9 863.0,324.0 864.0,324.3 865.0,326.0 865.9,327.9 866.8,329.0 867.9,327.4 869.0,326.5 870.0,324.7 871.0,324.0 872.7,324.0 874.3,324.9 876.0,324.3 877.3,324.9 878.7,324.0 880.0,324.5 881.7,324.3 883.3,325.8 885.0,325.5 886.3,325.4 887.7,325.5 889.0,325.0 890.3,324.7 891.7,325.0 893.0,326.0 894.3,327.1 895.7,327.5 897.0,328.5 898.3,327.6 899.7,328.9 901.0,328.0 902.3,328.5 903.7,329.1 905.0,329.0 906.3,328.2 907.7,329.2 909.0,328.5 910.5,328.1 912.0,329.0 913.3,330.1 914.7,329.9 916.0,330.5 917.3,330.4 918.7,330.9 920.0,331.0 921.7,332.0 923.3,331.3 925.0,332.0 926.5,332.2 928.0,333.5 929.3,334.0 930.7,334.1 932.0,335.0 933.3,334.7 934.7,335.1 936.0,336.0 937.3,335.9 938.7,336.9 940.0,338.0 941.2,338.2 942.5,338.7 943.8,339.9 945.0,340.0 946.7,339.9 948.3,340.5 950.0,340.7 955.0,341.0 958.0,341.0" fill="none" stroke="#f01818" stroke-width="1.1" stroke-linejoin="round"/>
<path d="M468.5,109 V135" stroke="#f0f0f0" stroke-width="1.2"/>
<rect x="446" y="341" width="513" height="2" fill="#a8a010"/>
<rect x="446" y="341" width="5" height="2" fill="#e8a000"/><rect x="948" y="341" width="10" height="2" fill="#e09a10"/>
<rect x="416" y="175" width="27" height="1.6" fill="#f01010"/>
<rect x="581" y="347" width="2" height="18" fill="#d01010"/>
<rect x="964" y="125" width="10" height="2" fill="#f01010"/><rect x="964" y="137" width="10" height="2" fill="#1a8af0"/><rect x="964" y="148.5" width="10" height="2" fill="#f0e000"/>
</svg>
<div style="position:absolute;left:444px;top:390px;width:514px;height:41px;background:#fff;border:1px solid #a0a0a0;box-sizing:border-box"></div>
<svg style="position:absolute;left:0;top:0" width="1024" height="601"><defs><linearGradient id="sg" gradientUnits="userSpaceOnUse" x1="446" y1="0" x2="957" y2="0"><stop offset="0.0000" stop-color="#000000"/><stop offset="0.4305" stop-color="#000000"/><stop offset="0.4344" stop-color="#0e0012"/><stop offset="0.4579" stop-color="#0a0030"/><stop offset="0.4775" stop-color="#000a48"/><stop offset="0.4971" stop-color="#001660"/><stop offset="0.5166" stop-color="#00287a"/><stop offset="0.5264" stop-color="#0a4a98"/><stop offset="0.5342" stop-color="#3080b0"/><stop offset="0.5401" stop-color="#60b0a8"/><stop offset="0.5440" stop-color="#28b048"/><stop offset="0.5519" stop-color="#18b018"/><stop offset="0.5851" stop-color="#20b020"/><stop offset="0.6067" stop-color="#40a818"/><stop offset="0.6223" stop-color="#709c10"/><stop offset="0.6341" stop-color="#a09008"/><stop offset="0.6458" stop-color="#8a4a0a"/><stop offset="0.6614" stop-color="#6a2808"/><stop offset="0.6830" stop-color="#401004"/><stop offset="0.7221" stop-color="#300400"/><stop offset="0.7906" stop-color="#280200"/><stop offset="0.8337" stop-color="#1e0200"/><stop offset="0.8395" stop-color="#000000"/><stop offset="1.0000" stop-color="#000000"/></linearGradient></defs><rect x="446" y="392" width="511" height="37" fill="url(#sg)"/></svg>
<div style="position:absolute;left:963px;top:388px;width:16px;height:15px;background:#eeeeee;border:1px solid #c4c4c4;box-sizing:border-box"></div>
<svg style="position:absolute;left:0;top:0;overflow:visible" width="1" height="1"><path d="M976.90,395.30 L976.79,396.45 L974.92,396.93 L974.53,397.66 L975.17,399.47 L974.28,400.21 L972.63,399.22 L971.83,399.47 L971.00,401.20 L969.85,401.09 L969.37,399.22 L968.64,398.83 L966.83,399.47 L966.09,398.58 L967.08,396.93 L966.83,396.13 L965.10,395.30 L965.21,394.15 L967.08,393.67 L967.47,392.94 L966.83,391.13 L967.72,390.39 L969.37,391.38 L970.17,391.13 L971.00,389.40 L972.15,389.51 L972.63,391.38 L973.36,391.77 L975.17,391.13 L975.91,392.02 L974.92,393.67 L975.17,394.47Z" fill="none" stroke="#9a9a9a" stroke-width="1.2"/><circle cx="971" cy="395.3" r="2.065" fill="none" stroke="#9a9a9a" stroke-width="1.2"/></svg>
<div style="position:absolute;left:962px;top:412px;width:11px;height:11px;background:#fff;border:1px solid #666;box-sizing:border-box"></div><svg style="position:absolute;left:962px;top:412px" width="11" height="11"><path d="M1.98,5.5 L4.4,8.14 L9.24,2.42" stroke="#222" stroke-width="1.2" fill="none"/></svg>
<div style="position:absolute;left:408px;top:445px;width:17px;height:16px;background:#e8e8e8;border:1px solid #c8c8c8;box-sizing:border-box"></div>
<svg style="position:absolute;left:410.6px;top:447.6px" width="12.8" height="12.8" viewBox="-5.4 -5.4 12.8 12.8"><circle cx="1" cy="1.1" r="4.4" fill="#505058"/><circle cx="0.3" cy="0.3" r="4.4" fill="#f4f4fa"/><circle cx="0" cy="0" r="4.4" fill="#1040d8"/><circle cx="-0.8" cy="-1" r="2.4200000000000004" fill="#3a70f0"/><path d="M-1.58,-1.41 Q-1.32,-3.17 0.2,-3.17 Q1.98,-3.08 1.76,-1.32 Q1.54,0 0.1,0.53 L0.1,1.41" stroke="#e8f0ff" stroke-width="0.88" fill="none"/><rect x="-0.35" y="2.11" width="1.10" height="1.06" fill="#fff"/></svg>
<div style="position:absolute;left:430.5px;top:445px;width:65.5px;height:17.5px;background:#e1e1e1;border:1px solid #adadad;box-sizing:border-box"></div>
<div style="position:absolute;left:502px;top:445px;width:65px;height:17.5px;background:#e1e1e1;border:1px solid #adadad;box-sizing:border-box"></div>
<div style="position:absolute;left:573.3px;top:445px;width:64.20000000000005px;height:17.5px;background:#e1e1e1;border:1px solid #adadad;box-sizing:border-box"></div>
<div style="position:absolute;left:626.5px;top:447px;width:1.2px;height:13px;background:#6a6a6a"></div>
<svg style="position:absolute;left:629.3px;top:451px" width="6" height="4"><path d="M0,0 L6,0 L3.0,4Z" fill="#000"/></svg>
<div style="position:absolute;left:770px;top:448px;width:80px;height:144px;border:1px solid #dcdcdc;box-sizing:border-box"></div>
<div style="position:absolute;left:644.5px;top:437.5px;width:160.5px;height:159px;background:#f0f0f0;border:1px solid #888;box-sizing:border-box;box-shadow:1px 1px 3px rgba(0,0,0,0.25)"></div>
<div style="position:absolute;left:645.5px;top:438.5px;width:158.5px;height:22.5px;background:#fff"></div>
<svg style="position:absolute;left:651px;top:445.5px" width="13" height="7"><rect width="13" height="6.5" fill="url(#ri)"/><path d="M2.6,7 L6.8,0.8 L10.2,7" stroke="#000" stroke-width="1" fill="none" opacity="0.75"/></svg>
<div style="position:absolute;left:711px;top:448.5px;width:8px;height:1.3px;background:#333"></div>
<div style="position:absolute;left:747px;top:445px;width:8px;height:8px;border:1px solid #d0d0d0;box-sizing:border-box"></div>
<svg style="position:absolute;left:782px;top:445px" width="9" height="9"><path d="M0.5,0.5 L8.5,8.5 M8.5,0.5 L0.5,8.5" stroke="#222" stroke-width="1.1"/></svg>
<div style="position:absolute;left:690.3px;top:463px;width:31px;height:14px;background:#f0f0f0;border:1px solid #d9d9d9;border-bottom:none;box-sizing:border-box"></div>
<div style="position:absolute;left:645.5px;top:461px;width:45px;height:17px;background:#fff;border-right:1px solid #d9d9d9;box-sizing:border-box"></div>
<div style="position:absolute;left:645.5px;top:477px;width:158.5px;height:66px;background:#fff"></div>
<div style="position:absolute;left:648px;top:480.3px;width:153px;height:61px;background:#fff;border:1px solid #a4a4a8;box-sizing:border-box"></div>
<div style="position:absolute;left:0;top:0;width:1024px;height:540.3px;overflow:hidden">
<div style="position:absolute;left:651.2px;top:482.7px;width:8.6px;height:8.6px;background:#fff;border:1px solid #a8a8a8;box-sizing:border-box"></div>
<div style="position:absolute;left:651.2px;top:493.5px;width:8.6px;height:8.6px;background:#fff;border:1px solid #a8a8a8;box-sizing:border-box"></div><svg style="position:absolute;left:651.2px;top:493.5px" width="8.6" height="8.6"><path d="M1.5479999999999998,4.3 L3.44,6.364 L7.223999999999999,1.892" stroke="#222" stroke-width="1.2" fill="none"/></svg>
<div style="position:absolute;left:651.2px;top:504.3px;width:8.6px;height:8.6px;background:#fff;border:1px solid #a8a8a8;box-sizing:border-box"></div>
<div style="position:absolute;left:651.2px;top:515.1px;width:8.6px;height:8.6px;background:#fff;border:1px solid #a8a8a8;box-sizing:border-box"></div>
<div style="position:absolute;left:651.2px;top:525.9px;width:8.6px;height:8.6px;background:#fff;border:1px solid #a8a8a8;box-sizing:border-box"></div>
<div style="position:absolute;left:651.2px;top:536.7px;width:8.6px;height:8.6px;background:#fff;border:1px solid #a8a8a8;box-sizing:border-box"></div>
<div class="t" style="left:662px;top:535px;font-size:9px;color:#111">M</div>
</div>
<div style="position:absolute;left:661.4px;top:492.5px;width:125px;height:10.2px;background:#3a96f0;border:1px solid #a06030;box-sizing:border-box"></div>
<div style="position:absolute;left:787px;top:481.5px;width:12.5px;height:58.5px;background:#f0f0f0"></div>
<svg style="position:absolute;left:789px;top:486px" width="8" height="5"><path d="M0.8,4 L4,1 L7.2,4" stroke="#555" stroke-width="1.2" fill="none"/></svg>
<svg style="position:absolute;left:789px;top:531px" width="8" height="5"><path d="M0.8,1 L4,4 L7.2,1" stroke="#555" stroke-width="1.2" fill="none"/></svg>
<div style="position:absolute;left:788px;top:501.5px;width:10.5px;height:13.5px;background:#cdcdcd"></div>
<div style="position:absolute;left:645.5px;top:543px;width:158.5px;height:1px;background:#f8f8f8"></div>
<div style="position:absolute;left:653.6px;top:548.1px;width:57px;height:16.6px;background:#cccccc"></div>
<div style="position:absolute;left:716.9px;top:548.1px;width:57.10000000000002px;height:16.600000000000023px;background:#e1e1e1;border:1px solid #adadad;box-sizing:border-box"></div>
<div style="position:absolute;left:653.6px;top:573.6px;width:16.100000000000023px;height:14.799999999999955px;background:#e8e8e8;border:1px solid #c8c8c8;box-sizing:border-box"></div>
<svg style="position:absolute;left:656.1px;top:575.2px" width="13.0" height="13.0" viewBox="-5.5 -5.5 13.0 13.0"><circle cx="1" cy="1.1" r="4.5" fill="#505058"/><circle cx="0.3" cy="0.3" r="4.5" fill="#f4f4fa"/><circle cx="0" cy="0" r="4.5" fill="#1040d8"/><circle cx="-0.8" cy="-1" r="2.475" fill="#3a70f0"/><path d="M-1.62,-1.44 Q-1.35,-3.24 0.2,-3.24 Q2.02,-3.15 1.80,-1.35 Q1.57,0 0.1,0.54 L0.1,1.44" stroke="#e8f0ff" stroke-width="0.90" fill="none"/><rect x="-0.36" y="2.16" width="1.12" height="1.08" fill="#fff"/></svg>
<div style="position:absolute;left:674.4px;top:573.6px;width:16.200000000000045px;height:14.799999999999955px;background:#e8e8e8;border:1px solid #c8c8c8;box-sizing:border-box"></div>
<svg style="position:absolute;left:676px;top:574px" width="14" height="14"><defs><linearGradient id="ag" x1="0" y1="1" x2="1" y2="0"><stop offset="0" stop-color="#002890"/><stop offset="0.5" stop-color="#1870d0"/><stop offset="1" stop-color="#50b0f0"/></linearGradient></defs><path d="M5,1 L13,1 L13,9Z" fill="#3aa0ec"/><path d="M4.5,13.2 Q2.5,8 10.2,3.8" stroke="url(#ag)" stroke-width="3.2" fill="none"/></svg>
<div style="position:absolute;left:716.9px;top:571.3px;width:57.10000000000002px;height:17.100000000000023px;background:#e1e1e1;border:1px solid #adadad;box-sizing:border-box"></div>
<div class="t" style="left:23.10px;top:7.70px;font-size:10.28px;line-height:10.28px;color:#a8a8a8;font-weight:400;transform:scaleX(0.902)">RSpec - C:\Users\tom.f\Documents\RSpecImages\K22Loop.avi</div>
<div class="t" style="left:6.07px;top:27.00px;font-size:9.72px;line-height:9.72px;color:#333;font-weight:400;transform:scaleX(0.929)">File</div>
<div class="t" style="left:30.00px;top:27.00px;font-size:9.72px;line-height:9.72px;color:#333;font-weight:400;transform:scaleX(1.000)">Edit</div>
<div class="t" style="left:57.00px;top:27.00px;font-size:9.72px;line-height:9.72px;color:#333;font-weight:400;transform:scaleX(0.952)">View</div>
<div class="t" style="left:89.00px;top:27.00px;font-size:9.72px;line-height:9.72px;color:#333;font-weight:400;transform:scaleX(0.955)">Tools</div>
<div class="t" style="left:119.95px;top:27.00px;font-size:9.72px;line-height:9.72px;color:#333;font-weight:400;transform:scaleX(1.053)">Help</div>
<div class="t" style="left:405.00px;top:66.50px;font-size:11.39px;line-height:11.39px;color:#111;font-weight:400;transform:scaleX(1.018)">Angstroms/Pixel: 12.3</div>
<div class="t" style="left:686.40px;top:83.80px;font-size:15.0px;line-height:15.0px;color:#fff;font-weight:400;transform:scaleX(1.026)">Vega</div>
<div class="t" style="left:676.20px;top:367.70px;font-size:10.0px;line-height:10.0px;color:#f01010;font-weight:700;transform:scaleX(0.981)">Angstroms</div>
<div class="t" style="left:961.56px;top:107.00px;font-size:11.11px;line-height:11.11px;color:#e8e8e8;font-weight:400;transform:scaleX(0.940)">Lines</div>
<div class="t" style="left:976.04px;top:121.50px;font-size:9.03px;line-height:9.03px;color:#e8e8e8;font-weight:400;transform:scaleX(0.958)">Profile</div>
<div class="t" style="left:976.00px;top:133.50px;font-size:9.03px;line-height:9.03px;color:#e8e8e8;font-weight:400;transform:scaleX(1.000)">Refer.</div>
<div class="t" style="left:43.19px;top:446.50px;font-size:10.42px;line-height:10.42px;color:#111;font-weight:400;transform:scaleX(0.810)">Rotate - 321.50</div>
<div class="t" style="left:120.79px;top:449.00px;font-size:9.44px;line-height:9.44px;color:#111;font-weight:400;transform:scaleX(0.910)">Subtract background</div>
<div class="t" style="left:35.74px;top:470.00px;font-size:9.44px;line-height:9.44px;color:#111;font-weight:400;transform:scaleX(0.959)">5.0 F/S</div>
<div class="t" style="left:6.95px;top:496.50px;font-size:9.72px;line-height:9.72px;color:#111;font-weight:400;transform:scaleX(0.854)">Live Camera</div>
<div class="t" style="left:63.30px;top:495.00px;font-size:9.44px;line-height:9.44px;color:#111;font-weight:400;transform:scaleX(0.876)">Video File</div>
<div class="t" style="left:107.75px;top:496.50px;font-size:9.72px;line-height:9.72px;color:#111;font-weight:400;transform:scaleX(0.850)">Image File</div>
<div class="t" style="left:221.96px;top:552.60px;font-size:8.75px;line-height:8.75px;color:#111;font-weight:400;transform:scaleX(1.039)">Loop</div>
<div class="t" style="left:46.86px;top:571.20px;font-size:9.17px;line-height:9.17px;color:#111;font-weight:400;transform:scaleX(0.935)">Play</div>
<div class="t" style="left:107.10px;top:571.20px;font-size:9.17px;line-height:9.17px;color:#111;font-weight:400;transform:scaleX(0.903)">Step  -1</div>
<div class="t" style="left:162.35px;top:571.20px;font-size:9.17px;line-height:9.17px;color:#111;font-weight:400;transform:scaleX(0.950)">Step +1</div>
<div class="t" style="left:258.80px;top:571.20px;font-size:9.17px;line-height:9.17px;color:#111;font-weight:400;transform:scaleX(0.927)">Open</div>
<div class="t" style="left:446.00px;top:450.40px;font-size:9.31px;line-height:9.31px;color:#111;font-weight:400;transform:scaleX(0.897)">Calibrate</div>
<div class="t" style="left:511.00px;top:450.40px;font-size:9.31px;line-height:9.31px;color:#111;font-weight:400;transform:scaleX(0.890)">Appearance</div>
<div class="t" style="left:578.78px;top:450.40px;font-size:9.31px;line-height:9.31px;color:#111;font-weight:400;transform:scaleX(0.919)">Reference</div>
<div class="t" style="left:974.25px;top:414.00px;font-size:9.03px;line-height:9.03px;color:#223;font-weight:700;transform:scaleX(0.750)">Fill</div>
<div class="t" style="left:666.76px;top:444.50px;font-size:9.86px;line-height:9.86px;color:#111;font-weight:400;transform:scaleX(0.941)">Elem...</div>
<div class="t" style="left:649.98px;top:464.90px;font-size:9.03px;line-height:9.03px;color:#111;font-weight:400;transform:scaleX(0.919)">Elements</div>
<div class="t" style="left:692.87px;top:466.60px;font-size:9.17px;line-height:9.17px;color:#111;font-weight:400;transform:scaleX(0.926)">Details</div>
<div class="t" style="left:662.21px;top:483.30px;font-size:9.31px;line-height:9.31px;color:#111;font-weight:400;transform:scaleX(0.993)">Helium</div>
<div class="t" style="left:662.48px;top:493.90px;font-size:9.31px;line-height:9.31px;color:#fff;font-weight:400;transform:scaleX(1.020)">Hydrogen Balmer</div>
<div class="t" style="left:662.27px;top:505.60px;font-size:9.31px;line-height:9.31px;color:#111;font-weight:400;transform:scaleX(1.030)">Iron and Magnesium</div>
<div class="t" style="left:661.94px;top:516.10px;font-size:9.31px;line-height:9.31px;color:#111;font-weight:400;transform:scaleX(1.065)">Krypton</div>
<div class="t" style="left:662.03px;top:526.70px;font-size:9.31px;line-height:9.31px;color:#111;font-weight:400;transform:scaleX(0.968)">Laser</div>
<div class="t" style="left:663.51px;top:552.50px;font-size:8.61px;line-height:8.61px;color:#a0a0a0;font-weight:400;transform:scaleX(0.985)">Select All</div>
<div class="t" style="left:721.33px;top:552.50px;font-size:8.61px;line-height:8.61px;color:#111;font-weight:400;transform:scaleX(0.971)">UnSelect All</div>
<div class="t" style="left:734.40px;top:576.00px;font-size:8.75px;line-height:8.75px;color:#111;font-weight:400;transform:scaleX(0.909)">Close</div>
<div class="t" style="left:431.45px;top:336.90px;font-size:9.44px;line-height:9.44px;color:#e8e8e8;font-weight:400;transform:scaleX(0.910)">0</div>
<div class="t" style="left:422.35px;top:318.92px;font-size:9.44px;line-height:9.44px;color:#e8e8e8;font-weight:400;transform:scaleX(0.853)">250</div>
<div class="t" style="left:421.44px;top:300.94px;font-size:9.44px;line-height:9.44px;color:#e8e8e8;font-weight:400;transform:scaleX(0.910)">500</div>
<div class="t" style="left:421.44px;top:282.96px;font-size:9.44px;line-height:9.44px;color:#e8e8e8;font-weight:400;transform:scaleX(0.910)">750</div>
<div class="t" style="left:416.89px;top:264.98px;font-size:9.44px;line-height:9.44px;color:#e8e8e8;font-weight:400;transform:scaleX(0.910)">1000</div>
<div class="t" style="left:416.89px;top:247.00px;font-size:9.44px;line-height:9.44px;color:#e8e8e8;font-weight:400;transform:scaleX(0.910)">1250</div>
<div class="t" style="left:416.89px;top:229.02px;font-size:9.44px;line-height:9.44px;color:#e8e8e8;font-weight:400;transform:scaleX(0.910)">1500</div>
<div class="t" style="left:416.89px;top:211.04px;font-size:9.44px;line-height:9.44px;color:#e8e8e8;font-weight:400;transform:scaleX(0.910)">1750</div>
<div class="t" style="left:417.80px;top:193.06px;font-size:9.44px;line-height:9.44px;color:#e8e8e8;font-weight:400;transform:scaleX(0.867)">2000</div>
<div class="t" style="left:417.80px;top:175.08px;font-size:9.44px;line-height:9.44px;color:#e8e8e8;font-weight:400;transform:scaleX(0.867)">2250</div>
<div class="t" style="left:417.80px;top:157.10px;font-size:9.44px;line-height:9.44px;color:#e8e8e8;font-weight:400;transform:scaleX(0.867)">2500</div>
<div class="t" style="left:417.80px;top:139.12px;font-size:9.44px;line-height:9.44px;color:#e8e8e8;font-weight:400;transform:scaleX(0.867)">2750</div>
<div class="t" style="left:417.80px;top:121.14px;font-size:9.44px;line-height:9.44px;color:#e8e8e8;font-weight:400;transform:scaleX(0.867)">3000</div>
<div class="t" style="left:465.93px;top:355.00px;font-size:9.31px;line-height:9.31px;color:#e8e8e8;font-weight:400;transform:scaleX(0.910)">0</div>
<div class="t" style="left:486.56px;top:355.00px;font-size:9.31px;line-height:9.31px;color:#e8e8e8;font-weight:400;transform:scaleX(0.975)">500</div>
<div class="t" style="left:510.46px;top:355.00px;font-size:9.31px;line-height:9.31px;color:#e8e8e8;font-weight:400;transform:scaleX(0.958)">1000</div>
<div class="t" style="left:536.62px;top:355.00px;font-size:9.31px;line-height:9.31px;color:#e8e8e8;font-weight:400;transform:scaleX(0.958)">1500</div>
<div class="t" style="left:563.74px;top:355.00px;font-size:9.31px;line-height:9.31px;color:#e8e8e8;font-weight:400;transform:scaleX(0.910)">2000</div>
<div class="t" style="left:589.90px;top:355.00px;font-size:9.31px;line-height:9.31px;color:#e8e8e8;font-weight:400;transform:scaleX(0.910)">2500</div>
<div class="t" style="left:616.06px;top:355.00px;font-size:9.31px;line-height:9.31px;color:#e8e8e8;font-weight:400;transform:scaleX(0.910)">3000</div>
<div class="t" style="left:642.22px;top:355.00px;font-size:9.31px;line-height:9.31px;color:#e8e8e8;font-weight:400;transform:scaleX(0.910)">3500</div>
<div class="t" style="left:668.38px;top:355.00px;font-size:9.31px;line-height:9.31px;color:#e8e8e8;font-weight:400;transform:scaleX(0.910)">4000</div>
<div class="t" style="left:694.54px;top:355.00px;font-size:9.31px;line-height:9.31px;color:#e8e8e8;font-weight:400;transform:scaleX(0.910)">4500</div>
<div class="t" style="left:719.74px;top:355.00px;font-size:9.31px;line-height:9.31px;color:#e8e8e8;font-weight:400;transform:scaleX(0.958)">5000</div>
<div class="t" style="left:745.90px;top:355.00px;font-size:9.31px;line-height:9.31px;color:#e8e8e8;font-weight:400;transform:scaleX(0.958)">5500</div>
<div class="t" style="left:773.02px;top:355.00px;font-size:9.31px;line-height:9.31px;color:#e8e8e8;font-weight:400;transform:scaleX(0.910)">6000</div>
<div class="t" style="left:799.18px;top:355.00px;font-size:9.31px;line-height:9.31px;color:#e8e8e8;font-weight:400;transform:scaleX(0.910)">6500</div>
<div class="t" style="left:824.38px;top:355.00px;font-size:9.31px;line-height:9.31px;color:#e8e8e8;font-weight:400;transform:scaleX(0.958)">7000</div>
<div class="t" style="left:850.54px;top:355.00px;font-size:9.31px;line-height:9.31px;color:#e8e8e8;font-weight:400;transform:scaleX(0.958)">7500</div>
<div class="t" style="left:877.66px;top:355.00px;font-size:9.31px;line-height:9.31px;color:#e8e8e8;font-weight:400;transform:scaleX(0.910)">8000</div>
<div class="t" style="left:903.82px;top:355.00px;font-size:9.31px;line-height:9.31px;color:#e8e8e8;font-weight:400;transform:scaleX(0.910)">8500</div>
<div class="t" style="left:929.98px;top:355.00px;font-size:9.31px;line-height:9.31px;color:#e8e8e8;font-weight:400;transform:scaleX(0.910)">9000</div>
<div style="position:absolute;left:0px;top:0px;width:1024px;height:1px;background:#a8a8a8"></div>
<div style="position:absolute;left:0px;top:0px;width:1px;height:601px;background:#b4b4b4"></div>
<div style="position:absolute;left:1022px;top:38px;width:2px;height:563px;background:#a8a8a8"></div>
<div style="position:absolute;left:1023px;top:0px;width:1px;height:38px;background:#d8d8d8"></div>
<div style="position:absolute;left:1020px;top:63px;width:1px;height:535px;background:#fbfbfb"></div>
<div style="position:absolute;left:393px;top:597px;width:628px;height:1px;background:#fbfbfb"></div>
<div style="position:absolute;left:0px;top:599px;width:1024px;height:2px;background:#a4a4a4"></div>
</body></html>
